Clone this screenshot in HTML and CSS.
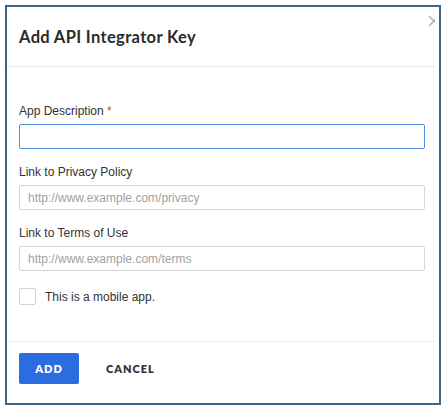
FILE: index.html
```html
<!DOCTYPE html>
<html>
<head>
<meta charset="utf-8">
<link rel="stylesheet" href="styles.css">
</head>
<body>
<div class="frame">
  <div class="dialog">
    <div class="header">
      <h1 class="title">Add API Integrator Key</h1>
      <svg class="close" width="12" height="12" viewBox="0 0 12 12" aria-label="Close">
        <path d="M1 1 L11 11 M11 1 L1 11" stroke="#a8a8a8" stroke-width="1.3" fill="none"/>
      </svg>
    </div>
    <div class="body">
      <label class="label">App Description <span class="req">*</span></label>
      <input class="input input-focus" type="text">
      <label class="label">Link to Privacy Policy</label>
      <input class="input" type="text" placeholder="http://www.example.com/privacy">
      <label class="label">Link to Terms of Use</label>
      <input class="input" type="text" placeholder="http://www.example.com/terms">
      <div class="check-row">
        <span class="checkbox"></span>
        <span class="check-label">This is a mobile app.</span>
      </div>
    </div>
    <div class="footer">
      <button class="btn btn-primary">ADD</button>
      <button class="btn btn-link">CANCEL</button>
    </div>
  </div>
</div>
</body>
</html>
```
FILE: styles.css
```css
html, body {
  margin: 0;
  padding: 0;
  background: #fff;
}
.frame {
  margin: 5px 0 0 5px;
  width: 432px;
  height: 396px;
  border: 2px solid #3a6592;
  background: #fff;
}
.dialog {
  width: 428px;
  height: 100%;
  position: relative;
  overflow: hidden;
}
.header {
  height: 59px;
  border-bottom: 1px solid #e8e8e8;
  padding-left: 12px;
  display: flex;
  align-items: center;
}
.title {
  margin: 0;
  padding-top: 1px;
  font-family: "Lato", "Open Sans", sans-serif;
  font-weight: 700;
  font-size: 16.5px;
  letter-spacing: 0.35px;
  color: #2b2b2b;
}
.close {
  position: absolute;
  right: -5px;
  top: 8px;
}
.body {
  padding: 36px 10px 0 12px;
  height: 275px;
  box-sizing: border-box;
  border-bottom: 1px solid #ececec;
  display: flex;
  flex-direction: column;
}
.label {
  font-family: "Liberation Sans", Arial, sans-serif;
  font-size: 12px;
  line-height: 16px;
  color: #333;
  margin-bottom: 5px;
}
.req {
  color: #e0463b;
}
.input {
  box-sizing: border-box;
  width: 406px;
  height: 25px;
  margin: 0 0 15px 0;
  padding: 0 8px;
  border: 1px solid #d6d6d6;
  border-radius: 2px;
  font-family: "Liberation Sans", Arial, sans-serif;
  font-size: 12px;
  color: #333;
  outline: none;
}
.input::placeholder {
  color: #a2a2a2;
}
.input-focus {
  border-color: #4a8fe0;
}
.check-row {
  display: flex;
  align-items: center;
  margin-top: 2px;
}
.checkbox {
  width: 15px;
  height: 15px;
  border: 1px solid #d2d2d2;
  border-radius: 2px;
  margin-right: 9px;
}
.check-label {
  font-family: "Liberation Sans", Arial, sans-serif;
  font-size: 12px;
  color: #333;
}
.footer {
  padding: 11px 12px 0 12px;
  display: flex;
  align-items: center;
}
.btn {
  font-family: "Lato", "Open Sans", sans-serif;
  font-weight: 800;
  font-size: 11px;
  letter-spacing: 1px;
  border: none;
  cursor: pointer;
}
.btn-primary {
  width: 60px;
  height: 31px;
  border-radius: 2px;
  background: #2b6de0;
  color: #fff;
  padding: 0;
}
.btn-link {
  background: none;
  color: #333;
  margin-left: 27px;
  padding: 0;
}
```
